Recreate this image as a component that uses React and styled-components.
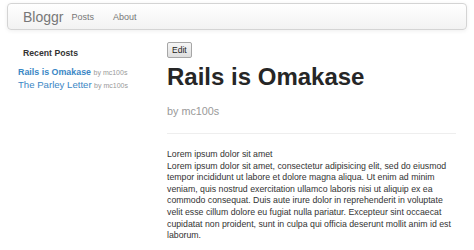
import React from "react";
import styled, { createGlobalStyle } from "styled-components";

const Global = createGlobalStyle`
  html, body { margin: 0; padding: 0; background: #fff; }
  body { font-family: "Liberation Sans", Arial, sans-serif; color: #333; }
`;

const Navbar = styled.div`
  margin: 3px 7px 0 7px;
  height: 25px;
  border: 1px solid #d4d4d4;
  border-radius: 4px;
  background: linear-gradient(to bottom, #ffffff, #f2f2f2);
  box-shadow: 0 1px 4px rgba(0, 0, 0, 0.065);
  display: flex;
  align-items: center;
  padding-left: 15px;
`;

const Brand = styled.a`
  font-size: 14px;
  color: #777;
  margin-right: 8px;
  text-decoration: none;
`;

const NavLink = styled.a`
  font-size: 9px;
  color: #777;
  margin-right: 19px;
  text-decoration: none;
`;

const Layout = styled.div`
  display: grid;
  grid-template-columns: 149px 289px;
  padding: 12px 0 0 18px;
`;

const Sidebar = styled.div`
  padding-top: 6px;
`;

const SideHeader = styled.div`
  font-size: 8.7px;
  line-height: 10px;
  font-weight: bold;
  color: #333;
  padding-left: 5px;
  margin-bottom: 8px;
`;

const SideItem = styled.div`
  font-size: 9px;
  line-height: 13px;
  white-space: nowrap;
`;

const SideLink = styled.a`
  font-size: ${(p) => (p.$active ? "8.9px" : "9.6px")};
  font-weight: ${(p) => (p.$active ? "bold" : "normal")};
  line-height: 1;
  color: #3a87c5;
  text-decoration: none;
`;

const ByLine = styled.span`
  font-size: 7px;
  line-height: 1;
  color: #999;
`;

const Main = styled.div``;

const EditButton = styled.button`
  font-family: "Liberation Sans", Arial, sans-serif;
  font-size: 8.5px;
  height: 16px;
  padding: 0 4px;
  border: 1px solid #a6a6a6;
  border-radius: 2px;
  background: linear-gradient(to bottom, #f6f6f6, #dedede);
  color: #222;
  display: block;
`;

const Title = styled.h1`
  margin: 4px 0 0 0;
  font-size: 24px;
  line-height: 30px;
  font-weight: bold;
  color: #262626;
`;

const Author = styled.div`
  margin-top: 13px;
  font-size: 10.8px;
  color: #999;
`;

const Rule = styled.hr`
  margin: 16px 0 15px 0;
  border: 0;
  border-top: 1px solid #eee;
`;

const Body = styled.div`
  font-size: 8.75px;
  line-height: 11.6px;
  color: #333;
`;

export default function App() {
  return (
    <>
      <Global />
      <Navbar>
        <Brand>Bloggr</Brand>
        <NavLink>Posts</NavLink>
        <NavLink>About</NavLink>
      </Navbar>
      <Layout>
        <Sidebar>
          <SideHeader>Recent Posts</SideHeader>
          <SideItem>
            <SideLink $active>Rails is Omakase</SideLink> <ByLine>by mc100s</ByLine>
          </SideItem>
          <SideItem>
            <SideLink>The Parley Letter</SideLink> <ByLine>by mc100s</ByLine>
          </SideItem>
        </Sidebar>
        <Main>
          <EditButton>Edit</EditButton>
          <Title>Rails is Omakase</Title>
          <Author>by mc100s</Author>
          <Rule />
          <Body>
            Lorem ipsum dolor sit amet
            <br />
            Lorem ipsum dolor sit amet, consectetur adipisicing elit, sed do eiusmod tempor incididunt ut labore et dolore magna aliqua. Ut enim ad minim veniam, quis nostrud exercitation ullamco laboris nisi ut aliquip ex ea commodo consequat. Duis aute irure dolor in reprehenderit in voluptate velit esse cillum dolore eu fugiat nulla pariatur. Excepteur sint occaecat cupidatat non proident, sunt in culpa qui officia deserunt mollit anim id est laborum.
          </Body>
        </Main>
      </Layout>
    </>
  );
}
